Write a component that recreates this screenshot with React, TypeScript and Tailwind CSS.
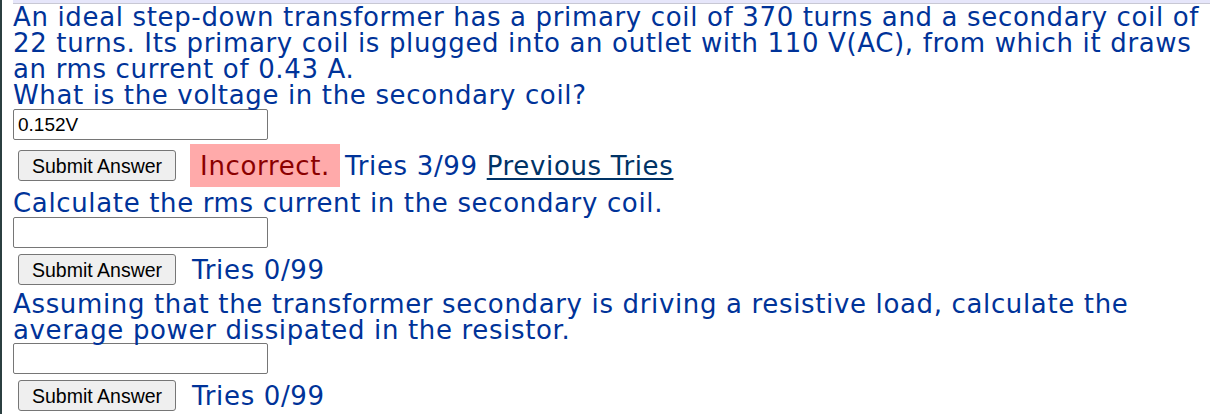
import React from "react";

const textFont = { fontFamily: '"DejaVu Sans", Verdana, sans-serif' };
const uiFont = { fontFamily: '"Liberation Sans", Arial, sans-serif' };

function AnswerInput({ value }: { value?: string }) {
  return (
    <input
      type="text"
      defaultValue={value}
      className="block h-[31px] w-[255px] rounded-[2px] border border-[#767676] bg-white px-[4px] text-[19px] tracking-normal text-black outline-none"
      style={uiFont}
    />
  );
}

function SubmitRow({ tries, incorrect }: { tries: string; incorrect?: boolean }) {
  return (
    <div className="flex h-[43px] items-center">
      <button
        className="ml-[5px] h-[31px] rounded-[3px] border border-[#767676] bg-[#efefef] px-[13px] text-[19.5px] tracking-normal text-black"
        style={uiFont}
      >
        Submit Answer
      </button>
      {incorrect ? (
        <>
          <span className="ml-[14px] flex h-full items-center bg-[#ffaaaa] px-[10px] text-[#8b0000]">Incorrect.</span>
          <span className="ml-[5px]">Tries {tries}</span>
          <a href="#" className="ml-[9px] text-[#003366] underline decoration-[2px] underline-offset-[3px]">
            Previous Tries
          </a>
        </>
      ) : (
        <span className="ml-[16px]">Tries {tries}</span>
      )}
    </div>
  );
}

export default function App() {
  return (
    <div className="min-h-screen border-l-2 border-[#2b3f40] bg-white pl-[11px] pr-[3px]">
      <div className="h-[4px] border-b border-[#c8c8d4] bg-[#e6e6fa]" />
      <div className="text-[26px] leading-[26px] tracking-[0.65px] text-[#003399]" style={textFont}>
        <p className="whitespace-nowrap">
          An ideal step-down transformer has a primary coil of 370 turns and a secondary coil of
          <br />
          22 turns. Its primary coil is plugged into an outlet with 110 V(AC), from which it draws
          <br />
          an rms current of 0.43 A.
          <br />
          What is the voltage in the secondary coil?
        </p>
        <div className="mt-[1px]">
          <AnswerInput value="0.152V" />
        </div>
        <div className="mt-[4px]">
          <SubmitRow tries="3/99" incorrect />
        </div>

        <p className="mt-[3px] whitespace-nowrap">Calculate the rms current in the secondary coil.</p>
        <div className="mt-[1px]">
          <AnswerInput />
        </div>
        <SubmitRow tries="0/99" />

        <p className="whitespace-nowrap">
          Assuming that the transformer secondary is driving a resistive load, calculate the
          <br />
          average power dissipated in the resistor.
        </p>
        <AnswerInput />
        <SubmitRow tries="0/99" />
      </div>
    </div>
  );
}
